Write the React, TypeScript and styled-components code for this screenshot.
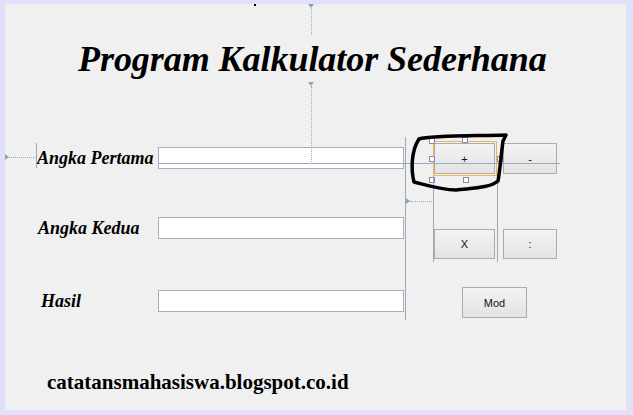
import React from 'react';
import styled, { createGlobalStyle } from 'styled-components';

const OX = 5;
const OY = 4;

const Global = createGlobalStyle`
  html, body { margin: 0; padding: 0; background: #e0e0fa; }
  body { width: 633px; height: 415px; overflow: hidden; }
`;

const Frame = styled.div`
  width: 633px;
  height: 415px;
  box-sizing: border-box;
  padding: 4px 7px 5px 5px;
  background: #e0e0fa;
`;

const Canvas = styled.div`
  position: relative;
  width: 100%;
  height: 100%;
  background: #f0f0f0;
  display: flex;
  flex-direction: column;
  overflow: hidden;
`;

const Title = styled.h1`
  margin: 35px 0 0;
  padding-left: 73px;
  font-family: "Liberation Serif", "Times New Roman", serif;
  font-weight: bold;
  font-style: italic;
  font-size: 36px;
  letter-spacing: -0.05px;
  line-height: 40px;
  color: #000;
  white-space: nowrap;
`;

const Body = styled.div`
  display: flex;
  align-items: flex-start;
`;

const Form = styled.div`
  padding: 68px 0 0 32px;
  display: flex;
  flex-direction: column;
`;

const FieldRow = styled.div<{ $gap: number }>`
  display: grid;
  grid-template-columns: 121px 246px;
  align-items: center;
  height: 22px;
  margin-top: ${p => p.$gap}px;
`;

const Label = styled.label<{ $indent: number }>`
  padding-left: ${p => p.$indent}px;
  font-family: "Liberation Serif", "Times New Roman", serif;
  font-weight: bold;
  font-style: italic;
  font-size: 18px;
  line-height: 22px;
  white-space: nowrap;
  color: #000;
`;

const Input = styled.input`
  box-sizing: border-box;
  width: 246px;
  height: 22px;
  margin: 0;
  padding: 0 3px;
  border: 1px solid #a7aeb8;
  background: #fff;
  outline: none;
`;

const Pad = styled.div`
  margin-left: 30px;
  padding-top: 64px;
  display: grid;
  grid-template-columns: 61px 54px;
  grid-template-rows: 31px 55px 30px 28px 31px;
  column-gap: 8px;
`;

const Key = styled.button<{ $row: number; $col?: number; $wide?: boolean }>`
  position: relative;
  box-sizing: border-box;
  margin: 0 0 0 ${p => (p.$wide ? 28 : 0)}px;
  padding: 0;
  width: ${p => (p.$wide ? '65px' : '100%')};
  grid-row: ${p => p.$row};
  grid-column: ${p => (p.$wide ? '1 / span 2' : p.$col)};
  justify-self: start;
  border: 1px solid #acacac;
  border-radius: 0;
  background: linear-gradient(#f3f3f3, #e3e3e3);
  font-family: "Liberation Sans", Arial, sans-serif;
  font-size: 11px;
  color: #111;
`;

const Selection = styled.span`
  position: absolute;
  left: -2px;
  top: -3px;
  right: -3px;
  bottom: -3px;
  border: 1px solid #f0b650;
  pointer-events: none;
`;

const Handle = styled.span<{ $x: number; $y: number }>`
  position: absolute;
  left: ${p => p.$x}px;
  top: ${p => p.$y}px;
  width: 4px;
  height: 4px;
  background: #fff;
  border: 1px solid #7f90a8;
`;

const Footer = styled.div`
  margin-top: 52px;
  padding-left: 42px;
  font-family: "Liberation Serif", "Times New Roman", serif;
  font-weight: bold;
  font-size: 21px;
  line-height: 24px;
  color: #000;
  white-space: nowrap;
`;

const Guide = styled.span<{ $x: number; $y: number; $w: number; $h: number; $dotted?: boolean }>`
  position: absolute;
  left: ${p => p.$x - OX}px;
  top: ${p => p.$y - OY}px;
  width: ${p => p.$w}px;
  height: ${p => p.$h}px;
  box-sizing: border-box;
  ${p =>
    p.$w === 1
      ? `border-left: 1px ${p.$dotted ? 'dotted' : 'solid'} #9aaac2;`
      : `border-top: 1px ${p.$dotted ? 'dotted' : 'solid'} #9aaac2;`}
  pointer-events: none;
`;

const Marker = styled.span<{ $x: number; $y: number; $dir: 'down' | 'right' }>`
  position: absolute;
  left: ${p => p.$x - OX}px;
  top: ${p => p.$y - OY}px;
  width: 0;
  height: 0;
  ${p =>
    p.$dir === 'down'
      ? `border-left: 3px solid transparent; border-right: 3px solid transparent; border-top: 4px solid #8ea2bc;`
      : `border-top: 3px solid transparent; border-bottom: 3px solid transparent; border-left: 4px solid #8ea2bc;`}
`;

const Dot = styled.span`
  position: absolute;
  left: ${254 - OX}px;
  top: ${4 - OY}px;
  width: 2px;
  height: 2px;
  background: #000;
`;

const Scribble = styled.svg`
  position: absolute;
  left: ${405 - OX}px;
  top: ${128 - OY}px;
  width: 110px;
  height: 68px;
  overflow: visible;
  pointer-events: none;
`;

const handles = [
  [-6, -6],
  [27, -7],
  [-6, 12],
  [62, 12],
  [-6, 33],
  [28, 33],
];

export default function App() {
  return (
    <Frame>
      <Global />
      <Canvas>
        <Title>Program Kalkulator Sederhana</Title>
        <Body>
          <Form>
            <FieldRow $gap={0}>
              <Label $indent={0}>Angka Pertama</Label>
              <Input />
            </FieldRow>
            <FieldRow $gap={48}>
              <Label $indent={1}>Angka Kedua</Label>
              <Input />
            </FieldRow>
            <FieldRow $gap={51}>
              <Label $indent={4}>Hasil</Label>
              <Input />
            </FieldRow>
          </Form>
          <Pad>
            <Key $row={1} $col={1}>
              +
              <Selection />
              {handles.map(([x, y], i) => (
                <Handle key={i} $x={x} $y={y} />
              ))}
            </Key>
            <Key $row={1} $col={2}>-</Key>
            <Key $row={3} $col={1}>X</Key>
            <Key $row={3} $col={2}>:</Key>
            <Key $row={5} $wide>Mod</Key>
          </Pad>
        </Body>
        <Footer>catatansmahasiswa.blogspot.co.id</Footer>

        <Dot />
        <Marker $x={308} $y={4} $dir="down" />
        <Guide $x={311} $y={8} $w={1} $h={27} $dotted />
        <Marker $x={308} $y={82} $dir="down" />
        <Guide $x={311} $y={86} $w={1} $h={76} $dotted />
        <Marker $x={5} $y={154} $dir="right" />
        <Guide $x={9} $y={157} $w={27} $h={1} $dotted />
        <Guide $x={36} $y={143} $w={1} $h={25} />
        <Guide $x={158} $y={163} $w={402} $h={1} />
        <Guide $x={405} $y={137} $w={1} $h={183} />
        <Guide $x={433} $y={176} $w={1} $h={86} />
        <Guide $x={497} $y={176} $w={1} $h={86} />
        <Marker $x={406} $y={198} $dir="right" />
        <Guide $x={410} $y={201} $w={22} $h={1} $dotted />

        <Scribble viewBox="405 128 110 68">
          <path
            d="M 419 139 C 432 135, 478 136, 506 135 L 503 141 C 501 156, 500 170, 498 181 C 490 188, 472 188, 456 190 C 441 190, 426 185, 414 182 C 411 170, 411 151, 419 139 Z"
            fill="none"
            stroke="#000"
            strokeWidth={3.5}
            strokeLinejoin="round"
            strokeLinecap="round"
          />
        </Scribble>
      </Canvas>
    </Frame>
  );
}
